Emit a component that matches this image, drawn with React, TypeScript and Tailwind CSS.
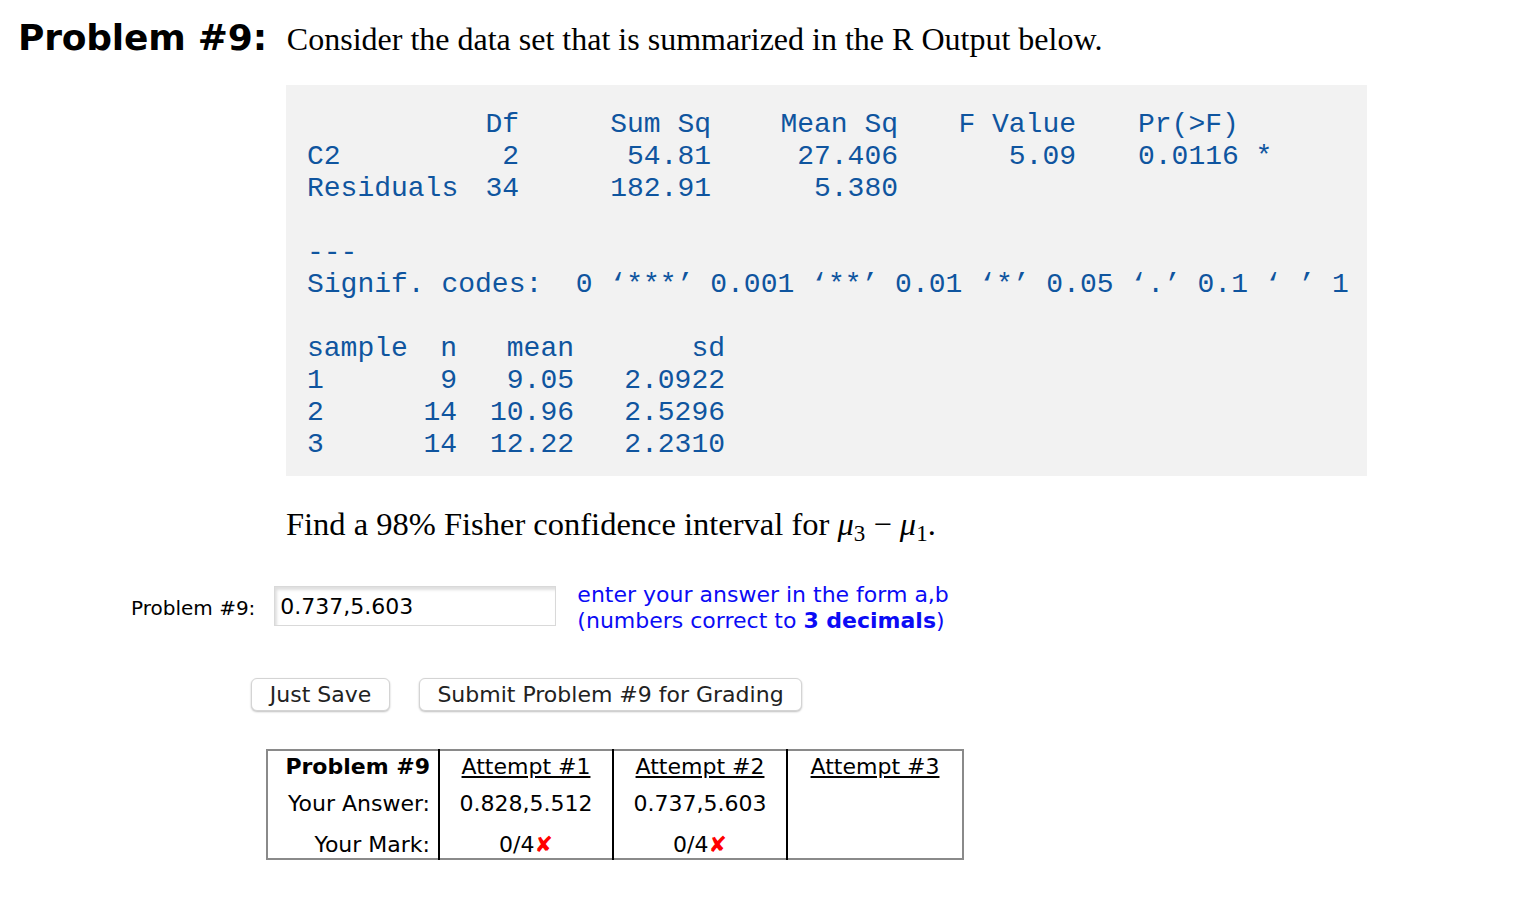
const mono = { fontFamily: '"Liberation Mono", "Courier New", monospace' }
const serif = { fontFamily: '"Liberation Serif", "Times New Roman", serif' }

const anova = [
  ["", "Df", "Sum Sq", "Mean Sq", "F Value", "Pr(>F)"],
  ["C2", "2", "54.81", "27.406", "5.09", "0.0116 *"],
  ["Residuals", "34", "182.91", "5.380", "", ""],
]

const samples = [
  ["sample", "n", "mean", "sd"],
  ["1", "9", "9.05", "2.0922"],
  ["2", "14", "10.96", "2.5296"],
  ["3", "14", "12.22", "2.2310"],
]

const attempts = [
  { title: "Attempt #1", answer: "0.828,5.512", mark: "0/4" },
  { title: "Attempt #2", answer: "0.737,5.603", mark: "0/4" },
  { title: "Attempt #3", answer: "", mark: "" },
]

const App = () => {
  return (
    <div className="min-h-screen bg-white text-black" style={{ fontFamily: '"DejaVu Sans", Verdana, sans-serif' }}>
      <div className="flex h-[85px] items-baseline pl-[18px] pt-[17px] leading-[42px]">
        <span className="text-[36px] font-bold tracking-[-0.2px]">Problem #9:</span>
        <span className="ml-[20px] text-[32px]" style={serif}>
          Consider the data set that is summarized in the R Output below.
        </span>
      </div>

      <div className="ml-[286px] w-[1081px] bg-[#f2f2f2] pl-[21px] pt-[24px] pb-[15px] text-[28px] leading-[32px] text-[#0f559f]" style={mono}>
        <div className="grid grid-cols-[150px_62px_192px_187px_178px_62px_1fr]">
          {anova.map((row, i) => (
            <div key={i} className="contents">
              <span>{row[0]}</span>
              <span className="text-right">{row[1]}</span>
              <span className="text-right">{row[2]}</span>
              <span className="text-right">{row[3]}</span>
              <span className="text-right">{row[4]}</span>
              <span></span>
              <span className="whitespace-pre">{row[5]}</span>
            </div>
          ))}
        </div>
        <div className="h-[32px]"></div>
        <div>---</div>
        <div className="whitespace-pre">Signif. codes:  0 ‘***’ 0.001 ‘**’ 0.01 ‘*’ 0.05 ‘.’ 0.1 ‘ ’ 1</div>
        <div className="h-[32px]"></div>
        <div className="grid grid-cols-[100px_50px_117px_151px]">
          {samples.map((row, i) => (
            <div key={i} className="contents">
              <span>{row[0]}</span>
              <span className="text-right">{row[1]}</span>
              <span className="text-right">{row[2]}</span>
              <span className="text-right">{row[3]}</span>
            </div>
          ))}
        </div>
      </div>

      <p className="ml-[286px] mt-[30px] h-[36px] text-[32.5px] leading-[36px]" style={serif}>
        Find a 98% Fisher confidence interval for <i>μ</i><sub className="text-[23px]">3</sub> − <i>μ</i><sub className="text-[23px]">1</sub>.
      </p>

      <div className="mt-[40px] flex items-start">
        <span className="ml-[131px] mt-[13px] text-[20px] leading-[26px]">Problem #9:</span>
        <div className="ml-[19px] mt-[4px] flex h-[40px] w-[282px] items-center border border-[#d9d9d9] bg-white pl-[5px] text-[22px] shadow-[inset_2px_3px_3px_rgba(0,0,0,0.13)]">
          0.737,5.603
        </div>
        <div className="ml-[21px] text-[22px] leading-[26px] text-[#0b0bf5]">
          <div>enter your answer in the form a,b</div>
          <div>
            (numbers correct to <b>3 decimals</b>)
          </div>
        </div>
      </div>

      <div className="ml-[251px] mt-[44px] flex gap-[29px]">
        <button className="h-[33px] w-[139px] rounded-[6px] border border-[#d4d4d4] bg-white text-[22px] leading-[26px] text-[#222] shadow-[0_1px_2px_rgba(0,0,0,0.25)]">
          Just Save
        </button>
        <button className="h-[33px] w-[383px] rounded-[6px] border border-[#d4d4d4] bg-white text-[22px] leading-[26px] text-[#222] shadow-[0_1px_2px_rgba(0,0,0,0.25)]">
          Submit Problem #9 for Grading
        </button>
      </div>

      <table className="ml-[266px] mt-[38px] border-collapse border-2 border-[#8a8a8a] text-[22px] leading-[26px]">
        <tbody>
          <tr className="h-[36px]">
            <td className="w-[172px] border-r-2 border-black px-[8px] pt-[3px] align-top text-right font-bold">Problem #9</td>
            {attempts.map((a, i) => (
              <td key={i} className={`px-[4px] pt-[3px] align-top text-center underline ${i < 2 ? "w-[174px] border-r-2 border-black" : "w-[176px]"}`}>
                {a.title}
              </td>
            ))}
          </tr>
          <tr className="h-[38px]">
            <td className="border-r-2 border-black px-[8px] pt-[5px] align-top text-right">Your Answer:</td>
            {attempts.map((a, i) => (
              <td key={i} className={`px-[4px] pt-[5px] align-top text-center ${i < 2 ? "border-r-2 border-black" : ""}`}>
                {a.answer}
              </td>
            ))}
          </tr>
          <tr className="h-[35px]">
            <td className="border-r-2 border-black px-[8px] pt-[8px] align-top text-right">Your Mark:</td>
            {attempts.map((a, i) => (
              <td key={i} className={`px-[4px] pt-[8px] align-top text-center ${i < 2 ? "border-r-2 border-black" : ""}`}>
                {a.mark}
                {a.mark && <span className="font-bold text-[#ff0000]">✘</span>}
              </td>
            ))}
          </tr>
        </tbody>
      </table>
    </div>
  )
}

export default App
